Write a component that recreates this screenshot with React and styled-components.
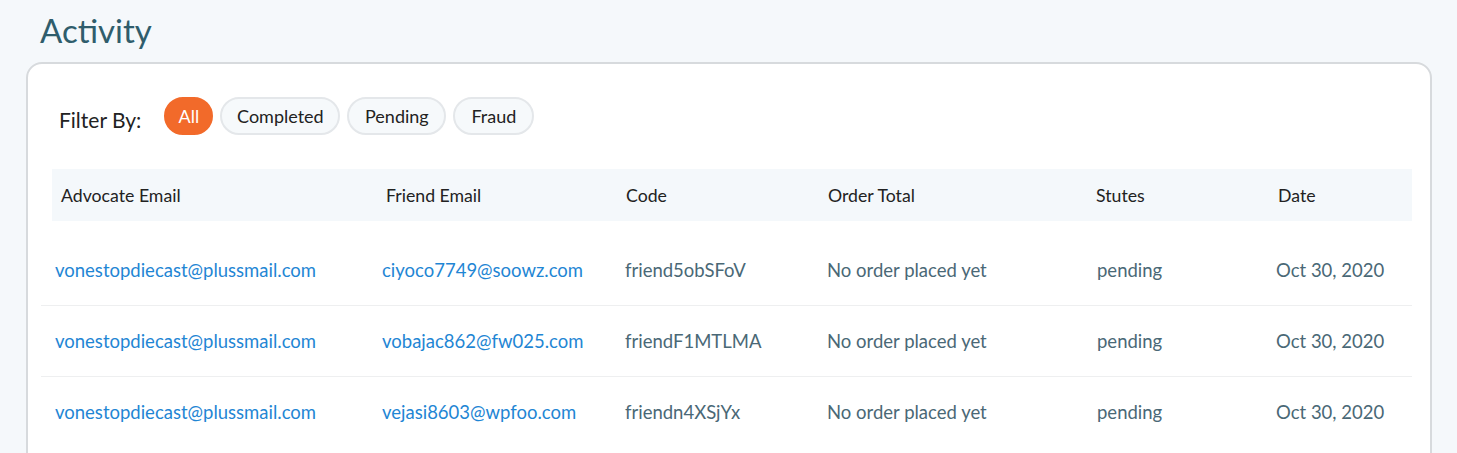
import styled, { createGlobalStyle } from "styled-components";

const FILTERS = [
  { label: "All", width: 49 },
  { label: "Completed", width: 120 },
  { label: "Pending", width: 99 },
  { label: "Fraud", width: 81 },
];

const HEAD_COLS = "325px 240px 202px 268px 182px 1fr";
const BODY_COLS = "327px 243px 202px 270px 179px 1fr";

const ROWS = [
  {
    advocate: "vonestopdiecast@plussmail.com",
    friend: "ciyoco7749@soowz.com",
    code: "friend5obSFoV",
  },
  {
    advocate: "vonestopdiecast@plussmail.com",
    friend: "vobajac862@fw025.com",
    code: "friendF1MTLMA",
  },
  {
    advocate: "vonestopdiecast@plussmail.com",
    friend: "vejasi8603@wpfoo.com",
    code: "friendn4XSjYx",
  },
];

const GlobalStyle = createGlobalStyle`
  body {
    margin: 0;
    background: #f5f8fb;
    font-family: Lato, "Open Sans", sans-serif;
  }
`;

const Page = styled.div`
  height: 453px;
  overflow: hidden;
  padding: 0 25px 0 26px;
`;

const Title = styled.h1`
  margin: 0;
  padding: 9px 0 0 14px;
  height: 62px;
  box-sizing: border-box;
  font-size: 33px;
  font-weight: 400;
  color: #2f5d6c;
  line-height: 42px;
`;

const Card = styled.div`
  background: #fff;
  border: 2px solid #d7dadd;
  border-radius: 16px;
  padding: 33px 18px 40px 13px;
  min-height: 420px;
`;

const FilterBar = styled.div`
  display: flex;
  align-items: center;
  height: 38px;
  padding-left: 18px;
`;

const FilterLabel = styled.span`
  font-size: 21px;
  color: #222;
  margin-right: 23px;
  margin-top: 7px;
`;

const Pill = styled.button`
  font-family: inherit;
  font-size: 18px;
  width: ${(p) => p.$width}px;
  height: 38px;
  padding: 0;
  margin-right: 7px;
  border-radius: 19px;
  border: 2px solid ${(p) => (p.$active ? "#f26a2a" : "#e4e7ea")};
  background: ${(p) => (p.$active ? "#f26a2a" : "#f6f9fb")};
  color: ${(p) => (p.$active ? "#fff" : "#222")};
  cursor: pointer;

  &:last-child {
    margin-right: 0;
  }
`;

const HeadRow = styled.div`
  display: grid;
  grid-template-columns: ${(p) => p.$cols};
  align-items: center;
  height: 52px;
  margin: 34px 0 14px 11px;
  padding-left: 9px;
  background: #f4f8fb;
  font-size: 17.7px;
  color: #222;
`;

const Row = styled.div`
  display: grid;
  grid-template-columns: ${(p) => p.$cols};
  align-items: center;
  height: 70px;
  padding-left: 14px;
  border-bottom: 1px solid #eeeff0;
  font-size: 18.5px;
  color: #4a6876;

  &:last-child {
    border-bottom: none;
  }
`;

const EmailLink = styled.a`
  color: #1f86d4;
  text-decoration: none;
`;

export default function App() {
  return (
    <>
      <GlobalStyle />
      <Page>
        <Title>Activity</Title>
        <Card>
          <FilterBar>
            <FilterLabel>Filter By:</FilterLabel>
            {FILTERS.map((f) => (
              <Pill key={f.label} $width={f.width} $active={f.label === "All"}>
                {f.label}
              </Pill>
            ))}
          </FilterBar>

          <HeadRow $cols={HEAD_COLS}>
            <span>Advocate Email</span>
            <span>Friend Email</span>
            <span>Code</span>
            <span>Order Total</span>
            <span>Stutes</span>
            <span>Date</span>
          </HeadRow>

          {ROWS.map((r) => (
            <Row key={r.friend} $cols={BODY_COLS}>
              <EmailLink href="#">{r.advocate}</EmailLink>
              <EmailLink href="#">{r.friend}</EmailLink>
              <span>{r.code}</span>
              <span>No order placed yet</span>
              <span>pending</span>
              <span>Oct 30, 2020</span>
            </Row>
          ))}
        </Card>
      </Page>
    </>
  );
}
